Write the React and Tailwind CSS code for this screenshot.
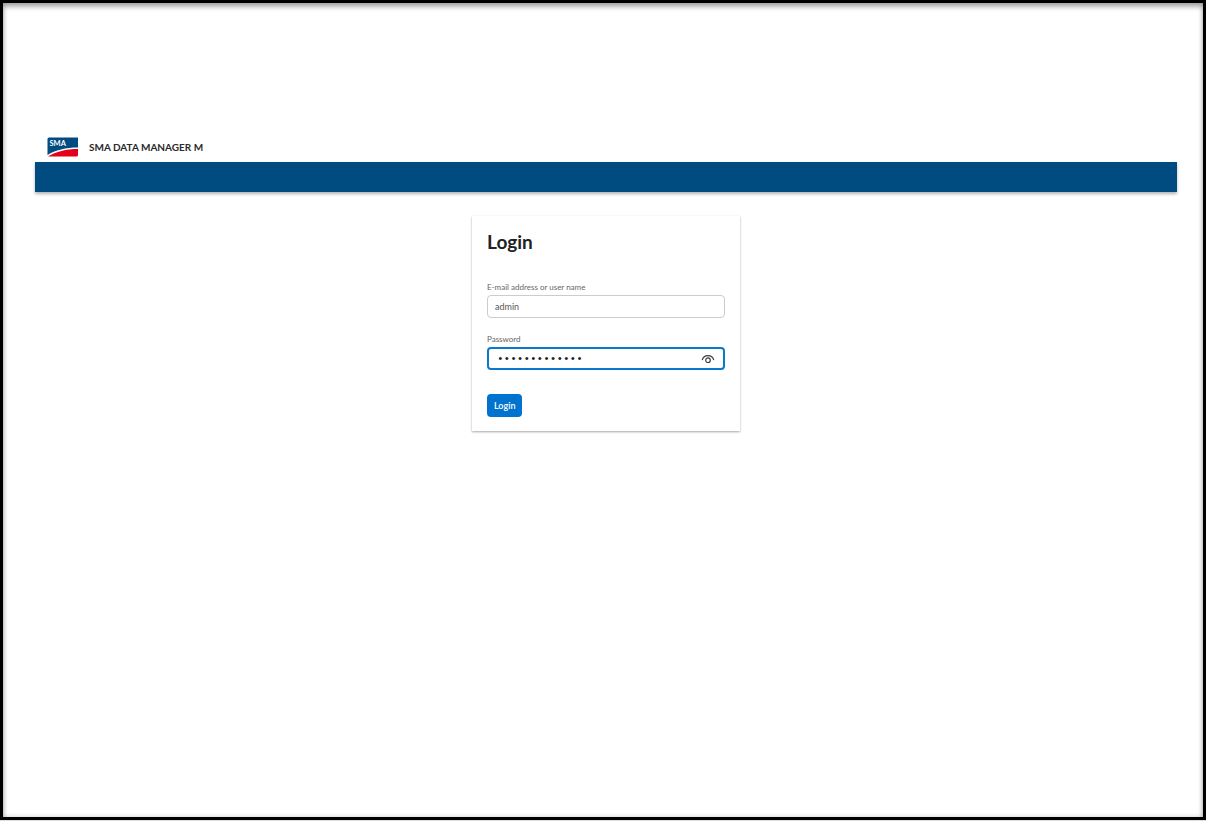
import React, { useState } from 'react';

const SmaLogo = () => (
  <svg viewBox="0 0 31 20" className="w-[31px] h-5 shrink-0" role="img" aria-label="SMA logo">
    <path d="M2 0.5H31V10.5C19 10.5 8 13 0.5 18V2Q0.5 0.5 2 0.5Z" fill="#004b80" />
    <path d="M31 12V18Q31 19.5 29.5 19.5H1C9 14.5 19 12 31 12Z" fill="#e2001a" />
    <text x="2.5" y="8.6" fontSize="7.5" fontWeight="700" fontFamily="Lato, sans-serif" fill="#fff">SMA</text>
  </svg>
);

const EyeIcon = () => (
  <svg viewBox="0 0 14 10" className="w-3.5 h-2.5" fill="none" stroke="#3c3c3c" strokeWidth="1.2">
    <path d="M1.2 6.2C2.8 0.2 11.2 0.2 12.8 6.2" />
    <circle cx="7" cy="6.2" r="2.3" />
  </svg>
);

const Header = () => (
  <header>
    <div className="flex items-center gap-[11px] h-[30px] pl-3">
      <SmaLogo />
      <span className="text-[10px] font-bold text-[#2a2a2a]">SMA DATA MANAGER M</span>
    </div>
    <div className="h-[30px] bg-[#004b80] shadow-[0_2px_3px_rgba(0,0,0,0.3)]" />
  </header>
);

const LoginForm = () => {
  const [user, setUser] = useState('admin');
  const [password, setPassword] = useState('administrator');
  const [visible, setVisible] = useState(false);

  return (
    <form
      onSubmit={(e) => e.preventDefault()}
      className="w-[268px] mx-auto mt-6 px-[15px] py-3.5 bg-white shadow-[0_1px_2px_rgba(0,0,0,0.35)]"
    >
      <h1 className="text-[19px] leading-6 font-bold text-[#222]">Login</h1>

      <label htmlFor="user" className="block mt-7 text-[8px] leading-[11px] text-[#666]">
        E-mail address or user name
      </label>
      <input
        id="user"
        type="text"
        value={user}
        onChange={(e) => setUser(e.target.value)}
        className="block w-full h-[23px] mt-0.5 px-[7px] rounded-sm border border-[#ccc] text-[9px] text-[#555] outline-none"
      />

      <label htmlFor="password" className="block mt-4 text-[8px] leading-[11px] text-[#666]">
        Password
      </label>
      <div className="flex items-center h-[23px] mt-0.5 px-2 rounded-sm border-2 border-[#0a78cc]">
        <input
          id="password"
          type={visible ? 'text' : 'password'}
          value={password}
          onChange={(e) => setPassword(e.target.value)}
          className="flex-1 min-w-0 h-full font-['Liberation_Mono',monospace] text-[11px] text-[#222] outline-none"
        />
        <button type="button" aria-label="Show password" onClick={() => setVisible(!visible)}>
          <EyeIcon />
        </button>
      </div>

      <button type="submit" className="block h-[23px] mt-6 px-[7px] rounded-sm bg-[#0073cf] text-[9px] font-semibold text-white">
        Login
      </button>
    </form>
  );
};

const App = () => {
  return (
    <div className="min-h-screen pb-px bg-[#ddd] flex flex-col font-[Lato,sans-serif]">
      <div className="flex-1 border-3 border-black bg-white pt-[129px] pl-8 pr-[26px] shadow-[inset_0_4px_5px_rgba(0,0,0,0.3),inset_0_0_5px_rgba(0,0,0,0.2)]">
        <Header />
        <main>
          <LoginForm />
        </main>
      </div>
    </div>
  );
};

export default App;
